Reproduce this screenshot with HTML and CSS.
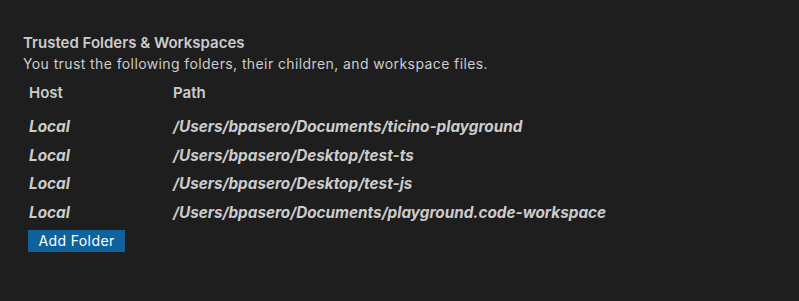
FILE: index.html
```html
<!DOCTYPE html>
<html lang="en">
<head>
    <meta charset="UTF-8">
    <title>Workspace Trust</title>
    <link rel="stylesheet" href="styles.css">
</head>
<body>
    <div class="trust">
        <h2 class="title">Trusted Folders &amp; Workspaces</h2>
        <p class="desc">You trust the following folders, their children, and workspace files.</p>
        <div class="table">
            <div class="row head">
                <div class="host">Host</div>
                <div class="path">Path</div>
            </div>
            <div class="row">
                <div class="host">Local</div>
                <div class="path">/Users/bpasero/Documents/ticino-playground</div>
            </div>
            <div class="row">
                <div class="host">Local</div>
                <div class="path">/Users/bpasero/Desktop/test-ts</div>
            </div>
            <div class="row">
                <div class="host">Local</div>
                <div class="path">/Users/bpasero/Desktop/test-js</div>
            </div>
            <div class="row">
                <div class="host">Local</div>
                <div class="path">/Users/bpasero/Documents/playground.code-workspace</div>
            </div>
        </div>
        <button class="add">Add Folder</button>
    </div>
</body>
</html>
```

FILE: styles.css
```css
* {
    padding: 0;
    margin: 0;
    box-sizing: border-box;
}

body {
    background: #1e1e1e;
    color: #cccccc;
    font-family: Inter, "Noto Sans", sans-serif;
    height: 301px;
    overflow: hidden;
}

.trust {
    padding: 34px 23px 0 23px;
}

.title {
    font-size: 15px;
    font-weight: 600;
    line-height: 18px;
}

.desc {
    font-size: 14px;
    letter-spacing: 0.4px;
    line-height: 19px;
    margin-top: 2px;
}

.table {
    margin-top: 5px;
}

.row {
    display: flex;
    height: 28.5px;
    align-items: center;
    font-size: 15.3px;
    font-weight: 700;
    font-style: italic;
}

.row.head {
    font-style: normal;
    font-weight: 600;
    font-size: 15px;
    margin-bottom: 6px;
}

.host {
    width: 150px;
    padding-left: 6px;
}

.add {
    margin: 3px 0 0 5px;
    background: #0e639c;
    color: #ffffff;
    border: none;
    font-family: Inter, "Noto Sans", sans-serif;
    font-size: 14px;
    letter-spacing: 0.4px;
    width: 97px;
    height: 22px;
}
```
